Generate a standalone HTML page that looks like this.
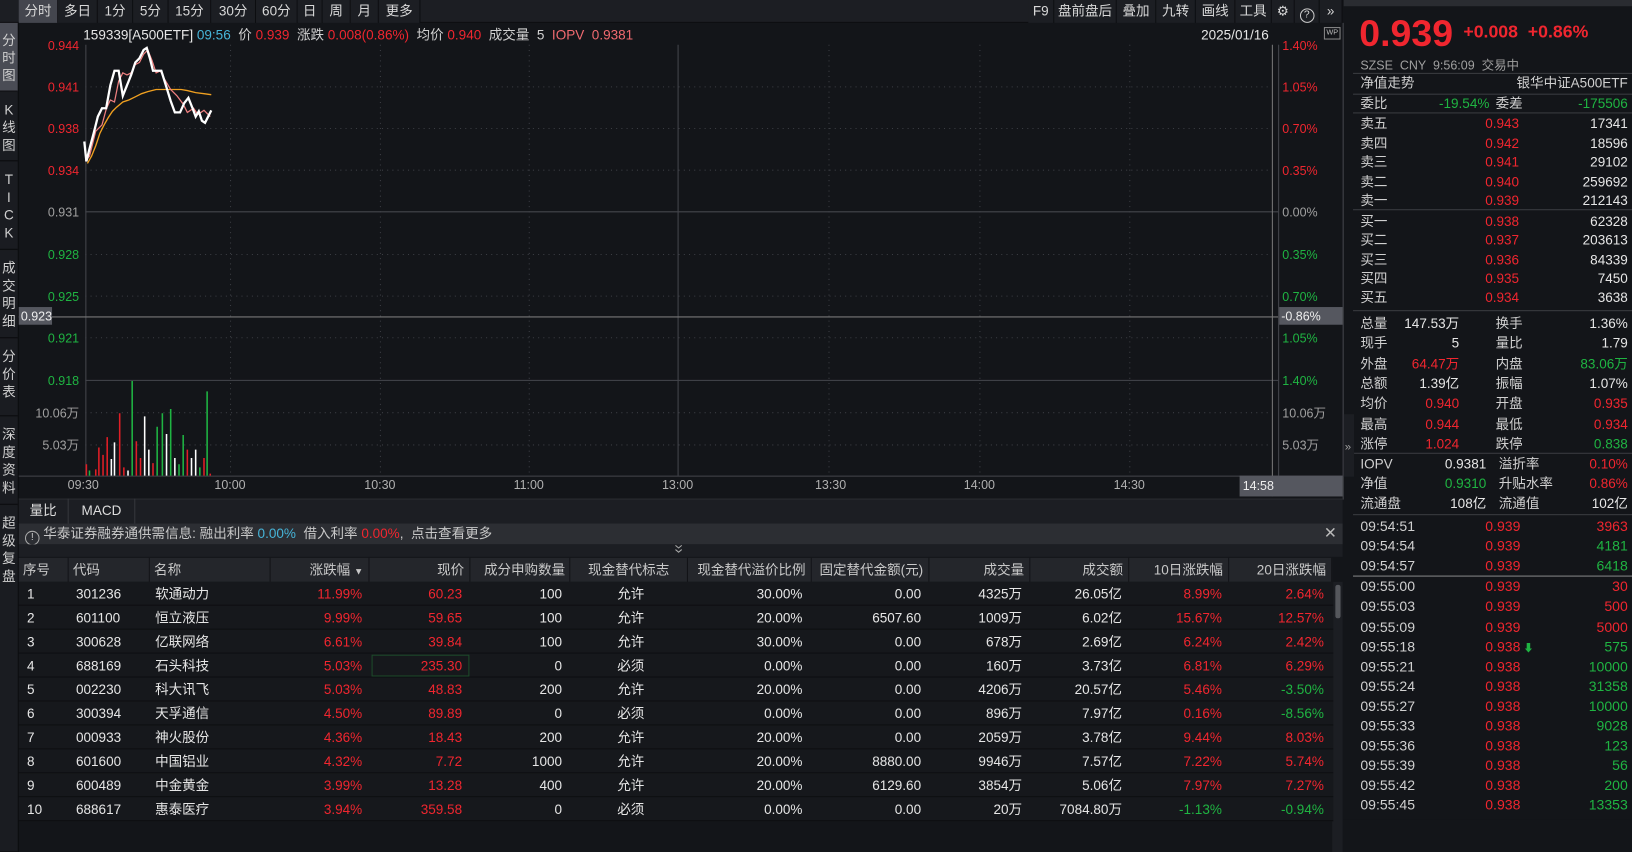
<!DOCTYPE html>
<html><head><meta charset="utf-8">
<style>
*{margin:0;padding:0;box-sizing:border-box}
html,body{width:1632px;height:819px;overflow:hidden;background:#131519}
#root{position:absolute;left:0;top:0;width:1568px;height:787px;transform:scale(1.0408);transform-origin:0 0;background:#131519;font-family:"Liberation Sans","Noto Sans CJK SC",sans-serif;font-size:13px;color:#d0d0d0}
.a{position:absolute;white-space:nowrap}
.r{color:#f0262f}.g{color:#1fb442}.w{color:#e6e6e6}.b{color:#46b4d8}.gr{color:#a0a0a0}
.tb{position:absolute;top:0;height:22px;background:#1c1e23;border-right:1px solid #0c0d10;line-height:22px;text-align:center;color:#d8d8d8}
.side{position:absolute;left:0;width:17px;background:#1a1c21;border-bottom:1px solid #0a0b0d;color:#d0d0d0;font-size:13px;line-height:17px;text-align:center;padding-top:8px}
.th{position:absolute;top:536px;height:23px;background:#24262b;border-right:1px solid #121317;line-height:23px;color:#c8c8c8}
.row{position:absolute;left:18px;width:1263px;height:23px;border-bottom:1px solid #0d0e11;background:#16181c}
.c{position:absolute;top:0;line-height:23px}
.rp{position:absolute;left:1307px;width:258px;height:19px;line-height:19px}
</style></head><body><div id="root">
<div class="a" style="left:0;top:0;width:1290px;height:22px;background:#1c1e23;border-bottom:1px solid #0c0d10"></div>
<div class="tb" style="left:18px;width:38px;background:#44464e">分时</div>
<div class="tb" style="left:56px;width:38px">多日</div>
<div class="tb" style="left:94px;width:34px">1分</div>
<div class="tb" style="left:128px;width:34px">5分</div>
<div class="tb" style="left:162px;width:41px">15分</div>
<div class="tb" style="left:203px;width:43px">30分</div>
<div class="tb" style="left:246px;width:40px">60分</div>
<div class="tb" style="left:286px;width:24px">日</div>
<div class="tb" style="left:310px;width:27px">周</div>
<div class="tb" style="left:337px;width:27px">月</div>
<div class="tb" style="left:364px;width:40px">更多</div>
<div class="tb" style="left:988px;width:25px">F9</div>
<div class="tb" style="left:1013px;width:60px">盘前盘后</div>
<div class="tb" style="left:1073px;width:38px">叠加</div>
<div class="tb" style="left:1111px;width:38px">九转</div>
<div class="tb" style="left:1149px;width:38px">画线</div>
<div class="tb" style="left:1187px;width:35px">工具</div>
<div class="tb" style="left:1222px;width:22px">⚙</div>
<div class="tb" style="left:1244px;width:24px"><span style="display:inline-block;width:14px;height:14px;border:1px solid #ccc;border-radius:50%;font-size:10px;line-height:12px;vertical-align:-2px">?</span></div>
<div class="tb" style="left:1268px;width:22px">»</div>
<div class="a" style="left:0;top:22px;width:18px;height:797px;background:#1a1c21;border-right:1px solid #0a0b0d"></div>
<div class="side" style="top:22px;height:66px;background:#4a4c55">分<br>时<br>图</div>
<div class="side" style="top:89px;height:66px">K<br>线<br>图</div>
<div class="side" style="top:156px;height:84px">T<br>I<br>C<br>K</div>
<div class="side" style="top:241px;height:84px">成<br>交<br>明<br>细</div>
<div class="side" style="top:326px;height:74px">分<br>价<br>表</div>
<div class="side" style="top:401px;height:84px">深<br>度<br>资<br>料</div>
<div class="side" style="top:486px;height:333px">超<br>级<br>复<br>盘</div>
<div class="a" style="left:80px;top:25px;line-height:17px"><span class="w">159339[A500ETF]</span> <span class="b">09:56</span> &nbsp;价 <span class="r">0.939</span> &nbsp;涨跌 <span class="r">0.008(0.86%)</span> &nbsp;均价 <span class="r">0.940</span> &nbsp;成交量 &nbsp;5 &nbsp;<span style="color:#f06a70">IOPV</span> &nbsp;<span style="color:#f06a70">0.9381</span></div>
<div class="a w" style="left:1154px;top:25px;line-height:17px">2025/01/16</div>
<div class="a" style="left:1272px;top:26px;width:16px;height:12px;border:1px solid #888;font-size:7px;line-height:10px;text-align:center;color:#bbb">WP</div>
<svg class="a" style="left:0;top:0" width="1292" height="480">
<g stroke="#3c3e44" stroke-dasharray="1,4" stroke-width="1">
<line x1="82" y1="83.5" x2="1222" y2="83.5"/><line x1="82" y1="123.5" x2="1222" y2="123.5"/><line x1="82" y1="163.5" x2="1222" y2="163.5"/>
<line x1="82" y1="244.5" x2="1222" y2="244.5"/><line x1="82" y1="284.5" x2="1222" y2="284.5"/><line x1="82" y1="324.5" x2="1222" y2="324.5"/>
<line x1="82" y1="396.5" x2="1222" y2="396.5"/><line x1="82" y1="427.5" x2="1222" y2="427.5"/>
<line x1="221.5" y1="43" x2="221.5" y2="457"/><line x1="365.5" y1="43" x2="365.5" y2="457"/><line x1="508.5" y1="43" x2="508.5" y2="457"/>
<line x1="796.5" y1="43" x2="796.5" y2="457"/><line x1="941.5" y1="43" x2="941.5" y2="457"/><line x1="1085.5" y1="43" x2="1085.5" y2="457"/>
</g>
<g stroke="#44464c" stroke-width="1">
<line x1="82.5" y1="43" x2="82.5" y2="457"/><line x1="1228.5" y1="43" x2="1228.5" y2="457"/>
<line x1="82" y1="203.5" x2="1228" y2="203.5"/><line x1="82" y1="365.5" x2="1228" y2="365.5"/>
<line x1="651.5" y1="43" x2="651.5" y2="457"/><line x1="18" y1="457.5" x2="1290" y2="457.5"/>
<line x1="1290.5" y1="22" x2="1290.5" y2="819"/>
</g>
<line x1="1222.5" y1="43" x2="1222.5" y2="477" stroke="#777" stroke-width="1"/>
<line x1="18" y1="304.5" x2="1228" y2="304.5" stroke="#777" stroke-width="1"/>
<rect x="18" y="295" width="32" height="17" fill="#55575f"/>
<text x="20" y="308" fill="#eee" font-size="12" font-family="Liberation Sans">0.923</text>
<rect x="1229" y="295" width="61" height="17" fill="#55575f"/>
<text x="1231" y="308" fill="#eee" font-size="12" font-family="Liberation Sans">-0.86%</text>
<rect x="1191" y="457" width="99" height="20" fill="#55575f"/>
<text x="1194" y="471" fill="#eee" font-size="12" font-family="Liberation Sans">14:58</text>
<g font-size="12" font-family="Liberation Sans" text-anchor="end">
<text x="76" y="48" fill="#f0262f">0.944</text><text x="76" y="88" fill="#f0262f">0.941</text><text x="76" y="128" fill="#f0262f">0.938</text><text x="76" y="168" fill="#f0262f">0.934</text>
<text x="76" y="208" fill="#a0a0a0">0.931</text><text x="76" y="249" fill="#1fb442">0.928</text><text x="76" y="289" fill="#1fb442">0.925</text><text x="76" y="329" fill="#1fb442">0.921</text><text x="76" y="370" fill="#1fb442">0.918</text>
<text x="76" y="401" fill="#a0a0a0">10.06万</text><text x="76" y="432" fill="#a0a0a0">5.03万</text>
</g>
<g font-size="12" font-family="Liberation Sans">
<text x="1232" y="48" fill="#f0262f">1.40%</text><text x="1232" y="88" fill="#f0262f">1.05%</text><text x="1232" y="128" fill="#f0262f">0.70%</text><text x="1232" y="168" fill="#f0262f">0.35%</text>
<text x="1232" y="208" fill="#a0a0a0">0.00%</text><text x="1232" y="249" fill="#1fb442">0.35%</text><text x="1232" y="289" fill="#1fb442">0.70%</text><text x="1232" y="329" fill="#1fb442">1.05%</text><text x="1232" y="370" fill="#1fb442">1.40%</text>
<text x="1232" y="401" fill="#a0a0a0">10.06万</text><text x="1232" y="432" fill="#a0a0a0">5.03万</text>
</g>
<g font-size="12" font-family="Liberation Sans" fill="#b0b0b0" text-anchor="middle">
<text x="80" y="470">09:30</text><text x="221" y="470">10:00</text><text x="365" y="470">10:30</text><text x="508" y="470">11:00</text><text x="651" y="470">13:00</text><text x="798" y="470">13:30</text><text x="941" y="470">14:00</text><text x="1085" y="470">14:30</text>
</g>
<g stroke-width="1.5">
<line x1="83" y1="457" x2="83" y2="446" stroke="#e01e26"/><line x1="86" y1="457" x2="86" y2="452" stroke="#1fb442"/>
<line x1="92" y1="457" x2="92" y2="451" stroke="#e01e26"/><line x1="95" y1="457" x2="95" y2="430" stroke="#e01e26"/>
<line x1="99" y1="457" x2="99" y2="437" stroke="#e01e26"/><line x1="103" y1="457" x2="103" y2="420" stroke="#e01e26"/>
<line x1="107" y1="457" x2="107" y2="441" stroke="#fff"/><line x1="110" y1="457" x2="110" y2="425" stroke="#fff"/>
<line x1="115" y1="457" x2="115" y2="397" stroke="#e01e26"/><line x1="119" y1="457" x2="119" y2="449" stroke="#e01e26"/>
<line x1="123" y1="457" x2="123" y2="452" stroke="#fff"/><line x1="127" y1="457" x2="127" y2="366" stroke="#1fb442"/>
<line x1="131" y1="457" x2="131" y2="424" stroke="#e01e26"/><line x1="135" y1="457" x2="135" y2="440" stroke="#e01e26"/>
<line x1="139" y1="457" x2="139" y2="400" stroke="#fff"/><line x1="143" y1="457" x2="143" y2="432" stroke="#fff"/>
<line x1="147" y1="457" x2="147" y2="445" stroke="#e01e26"/><line x1="151" y1="457" x2="151" y2="410" stroke="#1fb442"/>
<line x1="156" y1="457" x2="156" y2="397" stroke="#1fb442"/><line x1="160" y1="457" x2="160" y2="417" stroke="#fff"/>
<line x1="164" y1="457" x2="164" y2="393" stroke="#1fb442"/><line x1="168" y1="457" x2="168" y2="440" stroke="#fff"/>
<line x1="172" y1="457" x2="172" y2="446" stroke="#1fb442"/><line x1="176" y1="457" x2="176" y2="418" stroke="#1fb442"/>
<line x1="180" y1="457" x2="180" y2="432" stroke="#e01e26"/><line x1="184" y1="457" x2="184" y2="440" stroke="#fff"/>
<line x1="188" y1="457" x2="188" y2="432" stroke="#fff"/><line x1="192" y1="457" x2="192" y2="449" stroke="#1fb442"/>
<line x1="196" y1="457" x2="196" y2="440" stroke="#e01e26"/><line x1="199" y1="457" x2="199" y2="376" stroke="#1fb442"/>
<line x1="202" y1="457" x2="202" y2="455" stroke="#e01e26"/>
</g>
<polyline fill="none" stroke="#f0a020" stroke-width="1.3" points="84,157 88,150 92,140 96,128 100,120 104,113 108,107 112,103 118,98 124,96 130,93 136,90 142,88 150,86 158,86 166,86 174,86 180,87 188,89 196,90 203,91"/>
<polyline fill="none" stroke="#f08080" stroke-width="1.2" points="82,155 86,150 92,126 98,120 102,105 106,96 110,98 114,78 118,70 122,72 126,70 130,62 134,60 138,52 142,48 146,58 150,70 154,68 158,76 164,86 170,92 176,100 180,108 186,104 190,110 196,106 202,112"/>
<polyline fill="none" stroke="#ffffff" stroke-width="2.2" points="81,136 83,155 86,143 90,128 94,112 98,104 102,104 106,82 110,68 114,68 118,92 122,82 126,72 130,60 134,56 136,52 138,48 141,46 144,56 147,68 151,68 155,68 160,84 164,97 168,108 173,108 177,99 181,94 185,104 188,112 191,107 194,116 197,118 200,112 203,106"/>
</svg>
<div class="a" style="left:18px;top:479px;width:1272px;height:24px;background:#1c1e23;border-top:1px solid #2a2c31"></div>
<div class="a" style="left:18px;top:479px;width:48px;height:24px;border-right:1px solid #35373c;line-height:24px;text-align:center;color:#ddd">量比</div>
<div class="a" style="left:66px;top:479px;width:64px;height:24px;border-right:1px solid #35373c;line-height:24px;text-align:center;color:#ddd">MACD</div>
<div class="a" style="left:18px;top:503px;width:1272px;height:20px;background:#2c2e33;line-height:20px;padding-left:6px;color:#c8c8c8"><span style="display:inline-block;width:14px;height:14px;border:1px solid #aaa;border-radius:50%;font-size:10px;line-height:12px;text-align:center;vertical-align:-2px">!</span> 华泰证券融券通供需信息: 融出利率 <span class="b">0.00%</span> &nbsp;借入利率 <span class="r">0.00%</span>, &nbsp;点击查看更多</div>
<div class="a" style="left:1272px;top:503px;line-height:20px;color:#bbb;font-size:15px">✕</div>
<div class="a" style="left:18px;top:523px;width:1272px;height:12px;background:#1c1e23"></div>
<svg class="a" style="left:648px;top:523px" width="8" height="9"><path d="M1 1 L4 3.5 L7 1 M1 5 L4 7.5 L7 5" fill="none" stroke="#aaa" stroke-width="1"/></svg>
<div class="th" style="left:18px;width:48px;padding-left:4px">序号</div>
<div class="th" style="left:66px;width:78px;padding-left:4px">代码</div>
<div class="th" style="left:144px;width:116px;padding-left:4px">名称</div>
<div class="th" style="left:260px;width:95px;text-align:right;padding-right:5px">涨跌幅 <span style="font-size:9px">▼</span></div>
<div class="th" style="left:355px;width:97px;text-align:right;padding-right:5px">现价</div>
<div class="th" style="left:452px;width:96px;text-align:right;padding-right:4px">成分申购数量</div>
<div class="th" style="left:548px;width:113px;text-align:center">现金替代标志</div>
<div class="th" style="left:661px;width:119px;text-align:right;padding-right:5px">现金替代溢价比例</div>
<div class="th" style="left:780px;width:113px;text-align:right;padding-right:5px">固定替代金额(元)</div>
<div class="th" style="left:893px;width:97px;text-align:right;padding-right:5px">成交量</div>
<div class="th" style="left:990px;width:95px;text-align:right;padding-right:5px">成交额</div>
<div class="th" style="left:1085px;width:96px;text-align:right;padding-right:5px">10日涨跌幅</div>
<div class="th" style="left:1181px;width:99px;text-align:right;padding-right:5px">20日涨跌幅</div>
<div class="a" style="left:1280px;top:559px;width:10px;height:260px;background:#1c1e23"></div>
<div class="a" style="left:1283px;top:562px;width:5px;height:32px;background:#55575c;border-radius:2px"></div>
<div id="rows"></div>
<script>
var d=[["1","301236","软通动力","11.99%","60.23","100","允许","30.00%","0.00","4325万","26.05亿","8.99%","2.64%"],
["2","601100","恒立液压","9.99%","59.65","100","允许","20.00%","6507.60","1009万","6.02亿","15.67%","12.57%"],
["3","300628","亿联网络","6.61%","39.84","100","允许","30.00%","0.00","678万","2.69亿","6.24%","2.42%"],
["4","688169","石头科技","5.03%","235.30","0","必须","0.00%","0.00","160万","3.73亿","6.81%","6.29%"],
["5","002230","科大讯飞","5.03%","48.83","200","允许","20.00%","0.00","4206万","20.57亿","5.46%","-3.50%"],
["6","300394","天孚通信","4.50%","89.89","0","必须","0.00%","0.00","896万","7.97亿","0.16%","-8.56%"],
["7","000933","神火股份","4.36%","18.43","200","允许","20.00%","0.00","2059万","3.78亿","9.44%","8.03%"],
["8","601600","中国铝业","4.32%","7.72","1000","允许","20.00%","8880.00","9946万","7.57亿","7.22%","5.74%"],
["9","600489","中金黄金","3.99%","13.28","400","允许","20.00%","6129.60","3854万","5.06亿","7.97%","7.27%"],
["10","688617","惠泰医疗","3.94%","359.58","0","必须","0.00%","0.00","20万","7084.80万","-1.13%","-0.94%"]];
var h="";
d.forEach(function(r,i){
var t=559+i*23;
function cl(v){return v.charAt(0)=="-"?"g":"r";}
h+='<div class="row" style="top:'+t+'px">';
h+='<span class="c w" style="left:8px">'+r[0]+'</span>';
h+='<span class="c w" style="left:55px">'+r[1]+'</span>';
h+='<span class="c w" style="left:131px">'+r[2]+'</span>';
h+='<span class="c r" style="right:933px">'+r[3]+'</span>';
if(i==3)h+='<span class="a" style="left:339px;top:1px;width:94px;height:21px;border:1px solid #1d4a2a"></span>';
h+='<span class="c r" style="right:837px">'+r[4]+'</span>';
h+='<span class="c w" style="right:741px">'+r[5]+'</span>';
h+='<span class="c w" style="left:575px">'+r[6]+'</span>';
h+='<span class="c w" style="right:510px">'+r[7]+'</span>';
h+='<span class="c w" style="right:396px">'+r[8]+'</span>';
h+='<span class="c w" style="right:299px">'+r[9]+'</span>';
h+='<span class="c w" style="right:203px">'+r[10]+'</span>';
h+='<span class="c '+cl(r[11])+'" style="right:107px">'+r[11]+'</span>';
h+='<span class="c '+cl(r[12])+'" style="right:9px">'+r[12]+'</span>';
h+='</div>';});
document.getElementById("rows").innerHTML=h;
</script>
<div class="a" style="left:1291px;top:0;width:341px;height:6px;background:#2a2c31"></div>
<div class="a r" style="left:1306px;top:10px;font-size:36px;font-weight:bold;line-height:44px">0.939</div>
<div class="a r" style="left:1406px;top:21px;font-size:17px;font-weight:bold">+0.008 &nbsp;+0.86%</div>
<div class="a gr" style="left:1307px;top:54px;font-size:12px">SZSE &nbsp;CNY &nbsp;9:56:09 &nbsp;交易中</div>
<div class="a" style="left:1300px;top:70px;width:332px;height:1px;background:#3a3c41"></div>
<div class="rp" style="top:70px">净值走势<span style="position:absolute;right:1px">银华中证A500ETF</span></div>
<div class="a" style="left:1300px;top:90px;width:332px;height:1px;background:#3a3c41"></div>
<div class="rp" style="top:90px">委比<span class="g" style="position:absolute;right:134px">-19.54%</span><span style="position:absolute;left:130px">委差</span><span class="g" style="position:absolute;right:1px">-175506</span></div>
<div class="a" style="left:1300px;top:108px;width:332px;height:1px;background:#3a3c41"></div>
<div id="rp"></div>
<script>
var q=[["卖五","0.943","17341",109],["卖四","0.942","18596",128],["卖三","0.941","29102",146],["卖二","0.940","259692",165],["卖一","0.939","212143",183],
["买一","0.938","62328",203],["买二","0.937","203613",221],["买三","0.936","84339",240],["买四","0.935","7450",258],["买五","0.934","3638",276]];
var s="";
q.forEach(function(r){s+='<div class="rp" style="top:'+r[3]+'px">'+r[0]+'<span class="r" style="position:absolute;left:120px">'+r[1]+'</span><span class="w" style="position:absolute;right:1px">'+r[2]+'</span></div>';});
var st=[["总量","147.53万","w","换手","1.36%","w"],["现手","5","w","量比","1.79","w"],["外盘","64.47万","r","内盘","83.06万","g"],["总额","1.39亿","w","振幅","1.07%","w"],["均价","0.940","r","开盘","0.935","r"],["最高","0.944","r","最低","0.934","r"],["涨停","1.024","r","跌停","0.838","g"]];
st.forEach(function(r,i){s+='<div class="rp" style="top:'+(301+i*19.3)+'px">'+r[0]+'<span class="'+r[2]+'" style="position:absolute;right:163px">'+r[1]+'</span><span style="position:absolute;left:130px">'+r[3]+'</span><span class="'+r[5]+'" style="position:absolute;right:1px">'+r[4]+'</span></div>';});
var io=[["IOPV","0.9381","w","溢折率","0.10%","r"],["净值","0.9310","g","升贴水率","0.86%","r"],["流通盘","108亿","w","流通值","102亿","w"]];
io.forEach(function(r,i){s+='<div class="rp" style="top:'+(436+i*19)+'px">'+r[0]+'<span class="'+r[2]+'" style="position:absolute;right:137px">'+r[1]+'</span><span style="position:absolute;left:133px">'+r[3]+'</span><span class="'+r[5]+'" style="position:absolute;right:1px">'+r[4]+'</span></div>';});
var tk=[["09:54:51","0.939","3963","r"],["09:54:54","0.939","4181","g"],["09:54:57","0.939","6418","g"],["09:55:00","0.939","30","r"],["09:55:03","0.939","500","r"],["09:55:09","0.939","5000","r"],["09:55:18","0.938","575","g"],["09:55:21","0.938","10000","g"],["09:55:24","0.938","31358","g"],["09:55:27","0.938","10000","g"],["09:55:33","0.938","9028","g"],["09:55:36","0.938","123","g"],["09:55:39","0.938","56","g"],["09:55:42","0.938","200","g"],["09:55:45","0.938","13353","g"]];
tk.forEach(function(r,i){var t=496+i*19.1+(i>=3?1:0);s+='<div class="rp" style="top:'+t+'px;font-size:13.5px">'+r[0]+'<span class="r" style="position:absolute;left:120px">'+r[1]+(i==6?'<span class="g" style="font-size:10px"> ⬇</span>':'')+'</span><span class="'+r[3]+'" style="position:absolute;right:1px">'+r[2]+'</span></div>';});
document.getElementById("rp").innerHTML=s;
</script>
<div class="a" style="left:1300px;top:201px;width:332px;height:1px;background:#3a3c41"></div>
<div class="a" style="left:1300px;top:298px;width:332px;height:1px;background:#3a3c41"></div>
<div class="a" style="left:1300px;top:435px;width:332px;height:1px;background:#3a3c41"></div>
<div class="a" style="left:1300px;top:494px;width:332px;height:1px;background:#3a3c41"></div>
<div class="a" style="left:1300px;top:553px;width:332px;height:1px;background:#d0d0d0;opacity:.6"></div>
<div class="a" style="left:1291px;top:398px;width:10px;height:60px;background:#1c1e23"></div>
<div class="a gr" style="left:1292px;top:424px;font-size:11px">»</div>
</div></body></html>
